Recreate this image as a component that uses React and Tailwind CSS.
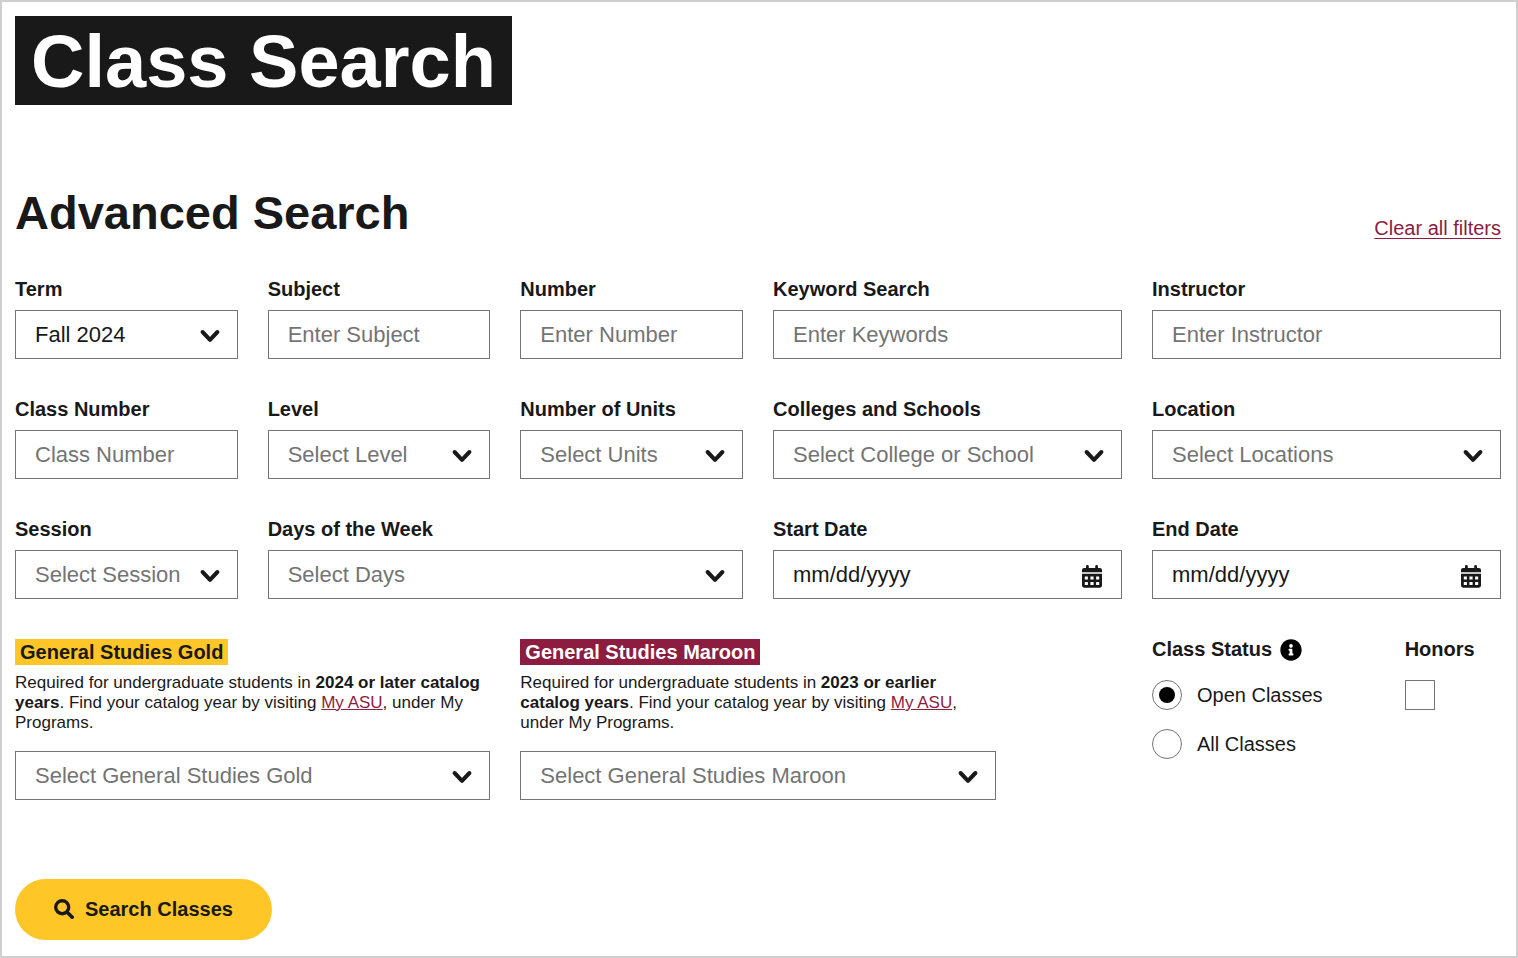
import React from "react";
import { FaInfoCircle } from "react-icons/fa";

const labelClass = "block text-xl leading-6 font-bold";
const boxClass =
  "col-start-1 row-start-1 h-[49px] w-full min-w-0 appearance-none rounded-none border border-[#747474] bg-white px-[19px] text-[22px] placeholder:text-[#747474] placeholder:opacity-100";

function ChevronIcon() {
  return (
    <svg
      viewBox="0 0 22 22"
      aria-hidden="true"
      className="pointer-events-none col-start-1 row-start-1 mt-0.5 mr-[17px] size-[22px] justify-self-end"
    >
      <path
        d="M3.6 7 11 14.8 18.4 7"
        fill="none"
        stroke="#191919"
        strokeWidth="4"
        strokeLinecap="round"
        strokeLinejoin="round"
      />
    </svg>
  );
}

function CalendarIcon() {
  return (
    <svg
      viewBox="0 0 20 23"
      fill="#191919"
      aria-hidden="true"
      className="pointer-events-none col-start-1 row-start-1 mt-[3px] mr-5 h-[23px] w-5 justify-self-end"
    >
      <path d="M4 3V1.4a1.4 1.4 0 0 1 2.8 0V3h6.4V1.4a1.4 1.4 0 0 1 2.8 0V3h1.9A2.1 2.1 0 0 1 20 5.1V7.2H0V5.1A2.1 2.1 0 0 1 2.1 3Z" />
      <path
        fillRule="evenodd"
        d="M0 8.7h20v11.9a2.1 2.1 0 0 1-2.1 2.1H2.1A2.1 2.1 0 0 1 0 20.6ZM2.8 11.5v3h3.1v-3Zm5.6 0v3h3.2v-3Zm5.7 0v3h3.1v-3ZM2.8 17v3h3.1v-3Zm5.6 0v3h3.2v-3Zm5.7 0v3h3.1v-3Z"
      />
    </svg>
  );
}

function SearchIcon() {
  return (
    <svg viewBox="0 0 20 20" aria-hidden="true" className="size-5">
      <g fill="none" stroke="currentColor" strokeLinecap="round">
        <circle cx="8.2" cy="8.2" r="6.5" strokeWidth="3.4" />
        <path d="m13.2 13.2 5 5" strokeWidth="3.7" />
      </g>
    </svg>
  );
}

function Field({ id, label, className, children }) {
  return (
    <div className={className}>
      <label htmlFor={id} className={labelClass}>
        {label}
      </label>
      <div className="mt-[9px]">{children}</div>
    </div>
  );
}

function TextBox({ id, placeholder }) {
  return (
    <div className="grid">
      <input id={id} type="text" placeholder={placeholder} className={boxClass} />
    </div>
  );
}

function DropDown({ id, value, chosen = false }) {
  return (
    <div className="grid items-center">
      <select
        id={id}
        className={`${boxClass} ${chosen ? "text-[#191919]" : "text-[#747474]"}`}
      >
        <option>{value}</option>
      </select>
      <ChevronIcon />
    </div>
  );
}

function DateBox({ id }) {
  return (
    <div className="grid items-center">
      <input
        id={id}
        type="date"
        className={`${boxClass} [&::-webkit-calendar-picker-indicator]:opacity-0 [&::-webkit-datetime-edit-day-field]:p-0 [&::-webkit-datetime-edit-month-field]:p-0 [&::-webkit-datetime-edit-year-field]:p-0`}
      />
      <CalendarIcon />
    </div>
  );
}

function StudiesField({ id, title, tagClass, years, value }) {
  return (
    <div className="pt-0.5 lg:col-span-4">
      <label
        htmlFor={id}
        className={`inline-block px-[5px] align-top text-xl leading-[26px] font-bold ${tagClass}`}
      >
        {title}
      </label>
      <p className="mt-2 mb-[18px] text-[17px] leading-5">
        Required for undergraduate students in <b>{years}</b>. Find your catalog
        year by visiting{" "}
        <a href="#my-asu" className="text-[#8c1d40] underline">
          My ASU
        </a>
        , under My Programs.
      </p>
      <DropDown id={id} value={value} />
    </div>
  );
}

function StatusOption({ value, label, defaultChecked }) {
  return (
    <label className="flex items-center gap-[15px] text-xl leading-[30px]">
      <input
        type="radio"
        name="class-status"
        value={value}
        defaultChecked={defaultChecked}
        className="grid size-[30px] shrink-0 appearance-none place-content-center rounded-full border border-[#747474] before:size-4 before:rounded-full checked:before:bg-black"
      />
      {label}
    </label>
  );
}

export default function App() {
  return (
    <main className="min-h-screen border-2 border-[#cfcfcf] bg-white pt-3.5 pr-[15px] pb-4 pl-[13px] font-['Liberation_Sans',Arial,sans-serif] text-[#191919]">
      <h1 className="inline-block bg-[#191919] px-4 pt-[3px] align-top text-[74px] leading-[86px] font-bold text-white">
        Class Search
      </h1>

      <form onSubmit={(event) => event.preventDefault()}>
        <div className="mt-[81px] flex flex-wrap items-end justify-between">
          <h2 className="text-[47px] leading-[54px] font-bold">Advanced Search</h2>
          <a
            href="#clear"
            className="text-xl leading-6 text-[#8c1d40] underline decoration-1 underline-offset-3"
          >
            Clear all filters
          </a>
        </div>

        <div className="mt-[37px] grid grid-cols-1 gap-x-[30px] gap-y-[38px] lg:grid-cols-12">
          <Field id="term" label="Term" className="lg:col-span-2">
            <DropDown id="term" value="Fall 2024" chosen />
          </Field>
          <Field id="subject" label="Subject" className="lg:col-span-2">
            <TextBox id="subject" placeholder="Enter Subject" />
          </Field>
          <Field id="number" label="Number" className="lg:col-span-2">
            <TextBox id="number" placeholder="Enter Number" />
          </Field>
          <Field id="keyword" label="Keyword Search" className="lg:col-span-3">
            <TextBox id="keyword" placeholder="Enter Keywords" />
          </Field>
          <Field id="instructor" label="Instructor" className="lg:col-span-3">
            <TextBox id="instructor" placeholder="Enter Instructor" />
          </Field>

          <Field id="class-number" label="Class Number" className="lg:col-span-2">
            <TextBox id="class-number" placeholder="Class Number" />
          </Field>
          <Field id="level" label="Level" className="lg:col-span-2">
            <DropDown id="level" value="Select Level" />
          </Field>
          <Field id="units" label="Number of Units" className="lg:col-span-2">
            <DropDown id="units" value="Select Units" />
          </Field>
          <Field id="college" label="Colleges and Schools" className="lg:col-span-3">
            <DropDown id="college" value="Select College or School" />
          </Field>
          <Field id="location" label="Location" className="lg:col-span-3">
            <DropDown id="location" value="Select Locations" />
          </Field>

          <Field id="session" label="Session" className="lg:col-span-2">
            <DropDown id="session" value="Select Session" />
          </Field>
          <Field id="days" label="Days of the Week" className="lg:col-span-4">
            <DropDown id="days" value="Select Days" />
          </Field>
          <Field id="start-date" label="Start Date" className="lg:col-span-3">
            <DateBox id="start-date" />
          </Field>
          <Field id="end-date" label="End Date" className="lg:col-span-3">
            <DateBox id="end-date" />
          </Field>

          <StudiesField
            id="studies-gold"
            title="General Studies Gold"
            tagClass="bg-[#ffc627]"
            years="2024 or later catalog years"
            value="Select General Studies Gold"
          />
          <StudiesField
            id="studies-maroon"
            title="General Studies Maroon"
            tagClass="bg-[#8c1d40] text-white"
            years="2023 or earlier catalog years"
            value="Select General Studies Maroon"
          />
          <fieldset className="lg:col-span-2 lg:col-start-10">
            <legend className="flex items-center gap-2 text-xl leading-6 font-bold">
              Class Status
              <button type="button" aria-label="About class status" className="pt-0.5 text-black">
                <FaInfoCircle size={22} aria-hidden="true" />
              </button>
            </legend>
            <div className="mt-[19px] flex flex-col gap-[19px]">
              <StatusOption value="open" label="Open Classes" defaultChecked />
              <StatusOption value="all" label="All Classes" />
            </div>
          </fieldset>
          <div>
            <label htmlFor="honors" className={labelClass}>
              Honors
            </label>
            <input
              id="honors"
              type="checkbox"
              className="mt-[19px] block size-[30px] appearance-none border border-[#747474] checked:bg-[#191919]"
            />
          </div>
        </div>

        <button
          type="submit"
          className="mt-[79px] flex h-[61px] items-center gap-[11px] rounded-full bg-[#ffc627] px-[39px] pb-0.5 text-xl font-bold"
        >
          <SearchIcon />
          Search Classes
        </button>
      </form>
    </main>
  );
}
